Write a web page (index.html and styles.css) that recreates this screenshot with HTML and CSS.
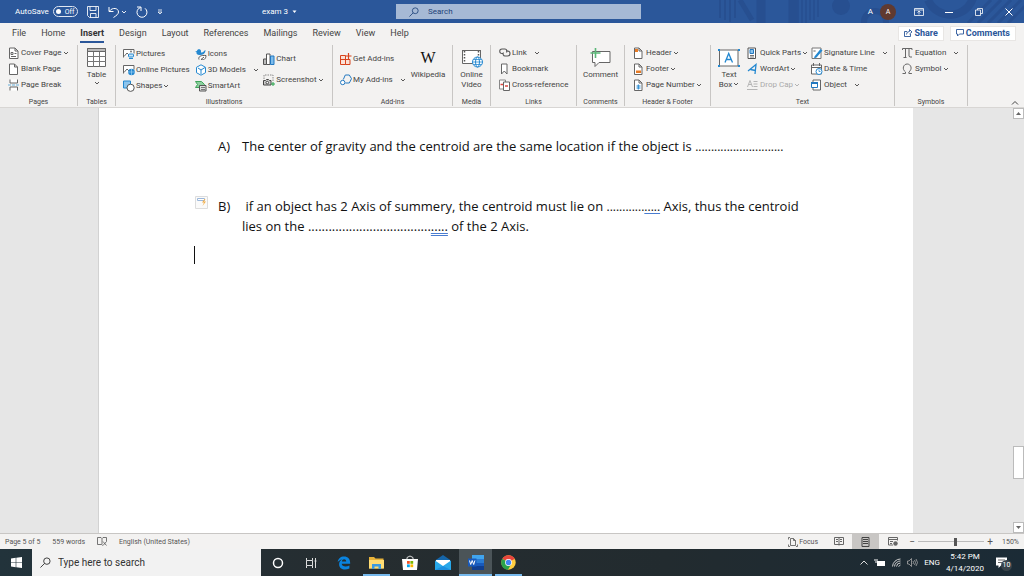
FILE: index.html
```html
<!DOCTYPE html>
<html lang="en">
<head>
<meta charset="utf-8">
<title>exam 3</title>
<link rel="stylesheet" href="styles.css">
</head>
<body>
<svg class="sprite" aria-hidden="true">
  <symbol id="caret" viewBox="0 0 6 6"><path d="M1 2l2 2 2-2" fill="none" stroke="currentColor" stroke-width=".9"/></symbol>
  <symbol id="cover" viewBox="0 0 12 12"><path d="M1.5 1h5.500l3 3v7.500h-8.500zM7 1v3h3M3 5.500h2v2h-2zM3 9.500h5M6.500 6.500h2" fill="#fff" stroke="#666"/></symbol>
  <symbol id="blank" viewBox="0 0 12 12"><path d="M1.500 1h5l3 3v7.500h-8zM6.500 1v3h3" fill="#fff" stroke="#666"/></symbol>
  <symbol id="break" viewBox="0 0 12 12"><path d="M2 .5v3.500h7.500v-3.500M2 11.500v-3.500h7.500v3.500" fill="#fff" stroke="#666"/><path d="M0 6h11.500" stroke="#69b1dc" stroke-dasharray="3 1"/></symbol>
  <symbol id="pictures" viewBox="0 0 12 12"><path d="M.5 9.500v-8h10.500v4M1 8.500l3-3.500 2 2" fill="#fff" stroke="#666"/><circle cx="8" cy="3.500" r="1" fill="#777"/><rect x="5.500" y="6" width="5" height="3" rx="1" fill="#c6e4f8" stroke="#2488d0"/><path d="M6 10.500h4" stroke="#2488d0"/></symbol>
  <symbol id="online" viewBox="0 0 12 12"><path d="M.5 9.500v-8h10.500v4M1 8.500l3-3.500 2 2" fill="#fff" stroke="#666"/><circle cx="8.500" cy="8" r="3.300" fill="#2488d0"/><path d="M5.500 8h6M8.500 5v6" stroke="#9dd0f2" stroke-width=".7"/></symbol>
  <symbol id="shapes" viewBox="0 0 12 12"><path d="M.5 1h7v7h-7z" fill="#8cc5ee" stroke="#2488d0"/><circle cx="7.600" cy="7.800" r="3.600" fill="#fff" stroke="#555"/></symbol>
  <symbol id="icons" viewBox="0 0 12 12"><path d="M0 3.500l2-.5c0-2.500 4-2.500 4 0v1.500c3 0 3-2 4.500-2.500 0 4-3 5-6 5-2.500 0-3.500-1.500-3-3z" fill="#2488d0"/><path d="M4 11.500c-1-3 2-4.500 7-4 0 3.500-2.500 5-5 4l3-2.500" fill="#fff" stroke="#555"/></symbol>
  <symbol id="cube" viewBox="0 0 12 12"><path d="M6 .8l4.500 2.500v5.400l-4.500 2.500-4.500-2.500v-5.400zM3 4l3 2 4-2.500M6 6v4" fill="#fff" stroke="#2488d0"/></symbol>
  <symbol id="smart" viewBox="0 0 12 12"><path d="M.5 1.500h6l3 3-3 3h-6l2-3z" fill="#8bcf9d" stroke="#3fa35a"/><path d="M4.500 5.500h6.500v5.500h-6.500z" fill="#ddd" stroke="#555"/><path d="M6 7.500h4M6 9.500h4" stroke="#777"/></symbol>
  <symbol id="chart" viewBox="0 0 12 12"><path d="M.5 6h3v5.500h-3z" fill="#bbb" stroke="#555"/><path d="M3.500 1h3.500v10.500h-3.500z" fill="#fff" stroke="#555"/><path d="M7.500 3h3.500v8.500h-3.500z" fill="#7dbcec" stroke="#2378c0"/></symbol>
  <symbol id="shot" viewBox="0 0 12 12"><path d="M1 5v-4h9v6" fill="none" stroke="#888" stroke-dasharray="1.500 1"/><path d="M.5 6.500h2l1-1h2l1 1h1.500v4.500h-7.500z" fill="#ccc" stroke="#444"/><circle cx="4.300" cy="8.600" r="1.300" fill="#fff" stroke="#444"/><path d="M10 8v4M8 10h4" stroke="#27a24b"/></symbol>
  <symbol id="getadd" viewBox="0 0 12 12"><path d="M.5 2.500h5v9h-5zM.5 6.500h9.500v5h-4.500v-5" fill="#fbe0d5" stroke="#d8431d"/><path d="M8.500 0v6M5.500 3h6" stroke="#d8431d" stroke-width="1.200"/></symbol>
  <symbol id="myadd" viewBox="0 0 12 12"><path d="M3.300 5.500l2-4.500h4l2.200 3.700-2.200 4.300h-4" fill="none" stroke="#2378c0"/><circle cx="2.700" cy="8.500" r="2.200" fill="#fff" stroke="#2378c0"/></symbol>
  <symbol id="link" viewBox="0 0 12 12"><path d="M4.500 6.500h-1.500a2 2 0 0 1 0-4.500h3a2.200 2.200 0 0 1 1.500 3.500M7 4h1.500a2.200 2.200 0 0 1 0 5h-2.500a2.200 2.200 0 0 1-1.500-3.500" fill="none" stroke="#555" stroke-width="1.100"/></symbol>
  <symbol id="mark" viewBox="0 0 12 12"><path d="M2.500 1h5.500v10l-2.700-3-2.800 3z" fill="#fff" stroke="#666"/></symbol>
  <symbol id="xref" viewBox="0 0 12 12"><path d="M.5 1h6v9h-6z" fill="#fff" stroke="#888"/><path d="M4.500 3h6v8.500h-6z" fill="#fff" stroke="#666"/><path d="M1.500 5.500h2.500M6 7h3" stroke="#dc4a42" stroke-width="1.400"/></symbol>
  <symbol id="header" viewBox="0 0 12 12"><path d="M1.500 1h4.500l3 3v7.500h-7.500zM6 1v3h3" fill="#fff" stroke="#666"/><path d="M2 2h3v3h-3z" fill="#e87b24"/></symbol>
  <symbol id="footer" viewBox="0 0 12 12"><path d="M1.500 1h4.500l3 3v7.500h-7.500zM6 1v3h3" fill="#fff" stroke="#666"/><path d="M3 7.500h5v2.500h-5z" fill="#e87b24"/></symbol>
  <symbol id="number" viewBox="0 0 12 12"><path d="M1.500 1h4.500l3 3v7.500h-7.500zM6 1v3h3" fill="#fff" stroke="#666"/><path d="M5.300 5.500v5M3.500 7h4M3.500 9h4" stroke="#2488d0"/></symbol>
  <symbol id="parts" viewBox="0 0 12 12"><path d="M1 1h7.500v10.500h-7.500z" fill="#fff" stroke="#555"/><path d="M3 2.500h3.500v4h-3.500z" fill="#8cc5ee" stroke="#2378c0"/><path d="M3 8.500h4M3 10h4" stroke="#777"/></symbol>
  <symbol id="wordart" viewBox="0 0 12 12"><path d="M1 8l8-6.500-1 9.500M3.500 6.500l5 1" fill="none" stroke="#2488d0" stroke-width="1.300"/></symbol>
  <symbol id="drop" viewBox="0 0 12 12"><path d="M.5 8l2.500-6.500 2.500 6.500M1.500 5.500h3M6.500 2.500h4M6.500 5h4M6.500 7.500h4M0 10.500h10.500" fill="none" stroke="#b5b5b5"/></symbol>
  <symbol id="sign" viewBox="0 0 12 12"><path d="M1 1h9v10.500h-9z" fill="#fff" stroke="#777"/><path d="M2.500 3l2 2m0-2l-2 2" stroke="#777" stroke-width=".7"/><path d="M3.500 9.500l6-7.500 2 1.500-6 7-2.500 1z" fill="#2488d0"/></symbol>
  <symbol id="date" viewBox="0 0 12 12"><path d="M.5 2h10v9h-10zM.5 4.500h10M2.500 0v3M8.500 0v3" fill="#fff" stroke="#666"/><circle cx="8" cy="8.500" r="3" fill="#fff" stroke="#2488d0"/><path d="M8 6.500v2h1.500" fill="none" stroke="#2488d0" stroke-width=".8"/></symbol>
  <symbol id="object" viewBox="0 0 12 12"><path d="M2 1h7.500v10h-7.500z" fill="#fff" stroke="#666"/><path d="M.5 3.500h6v5h-6z" fill="#fff" stroke="#2378c0"/><path d="M0 3h7v2h-7z" fill="#2378c0"/></symbol>
  <symbol id="pi" viewBox="0 0 12 12"><path d="M.5 3v-1.500h9.500v1.500M3.500 1.500v9M1.500 10.500h3M7 1.500v7.500q0 1.500 3 1" fill="none" stroke="#666"/></symbol>
  <symbol id="omega" viewBox="0 0 12 12"><path d="M.5 10.500h3v-1.500c-4-3-2-8 1.700-8s5.700 5 1.700 8v1.500h3" fill="none" stroke="#666"/></symbol>
  <symbol id="lens" viewBox="0 0 12 12"><circle cx="7.500" cy="4.500" r="3.500" fill="none" stroke="currentColor"/><path d="M5 7l-4.500 4.500" stroke="currentColor"/></symbol>
</svg>

<header class="titlebar">
  <svg class="pattern" viewBox="0 0 306 23" aria-hidden="true"><g fill="none" stroke="#274f90"><path d="M2 0v18M7 0v20M12 0v22M17 0v18" stroke-width="2"/><path d="M43 0v23M75 0v23" stroke-width="9" /><path d="M22 0l12 20" stroke-width="5"/><path d="M80 0v23M84 0v23M88 0v23M92 0v20M96 0v20M100 0v17" stroke-width="1.500"/><circle cx="123" cy="6" r="9" fill="#274f90" stroke="none"/><circle cx="157" cy="22" r="11" stroke-width="6"/><path d="M210 0a24 24 0 0 0 45-2" stroke-width="8"/><path d="M250 23l23-23M260 23l23-23M270 23l23-23M280 23l23-23M290 23l23-23" stroke-width="3"/></g></svg>
  <div class="quick">
    <label class="autosave">AutoSave <input type="checkbox" class="toggle"><span class="pill">Off</span></label>
    <button class="tool" aria-label="Save"><svg width="12" height="12" viewBox="0 0 12 12"><path d="M.5.5h11v11h-9l-2-2zM3 .5v4h6v-4M3.500 11.500v-4h5.500v4" fill="none" stroke="#fff" stroke-opacity=".85"/></svg></button>
    <button class="tool" aria-label="Undo"><svg width="12" height="12" viewBox="0 0 12 12"><path d="M1 1v4.500h4.500M1.500 5c3-4 9-3 9 1 0 2-2 3.500-5 5.500" fill="none" stroke="#fff"/></svg><svg width="6" height="6"><use href="#caret"/></svg></button>
    <button class="tool" aria-label="Redo"><svg width="12" height="12" viewBox="0 0 12 12"><path d="M1 1h4v4M4.500 1.500a5 5 0 1 0 4.500.8" fill="none" stroke="#fff"/></svg></button>
    <button class="tool" aria-label="Customize"><svg width="6" height="6" viewBox="0 0 6 6"><path d="M1 1h4M1 3l2 2 2-2z" fill="none" stroke="#fff" stroke-width=".8"/></svg></button>
  </div>
  <button class="doc-name">exam 3 <svg width="5" height="4" viewBox="0 0 5 4"><path d="M.5.500h4l-2 2.500z" fill="#fff"/></svg></button>
  <label class="search"><svg width="10" height="10"><use href="#lens"/></svg><input type="search" placeholder="Search" aria-label="Search"></label>
  <div class="window-tools">
    <span class="user">A</span><button class="avatar">A</button>
    <button class="win" aria-label="Ribbon display"><svg width="10" height="8" viewBox="0 0 10 8"><path d="M.5.5h9v7h-9zM.5 2h9M5 6.500v-3M3.500 4.500l1.500-1.500 1.500 1.500" fill="none" stroke="#fff" stroke-width=".8"/></svg></button>
    <button class="win" aria-label="Minimize"><svg width="8" height="8" viewBox="0 0 8 8"><path d="M0 4.500h8" stroke="#fff"/></svg></button>
    <button class="win" aria-label="Restore"><svg width="8" height="8" viewBox="0 0 8 8"><path d="M.5 2h5v5.500h-5zM2.500 2v-1.500h5v5h-2" fill="none" stroke="#fff" stroke-width=".8"/></svg></button>
    <button class="win" aria-label="Close"><svg width="8" height="8" viewBox="0 0 8 8"><path d="M.5.5l7 7M7.500.5l-7 7" stroke="#fff"/></svg></button>
  </div>
</header>

<nav class="tabs">
  <button>File</button><button>Home</button><button class="active">Insert</button><button>Design</button><button>Layout</button><button>References</button><button>Mailings</button><button>Review</button><button>View</button><button>Help</button>
  <div class="tab-actions">
    <button class="action"><svg width="8" height="8" viewBox="0 0 8 8"><path d="M3 2.500h-2.500v5h6v-2.500M2.500 5.500q0-3 3-3v-2l2.500 2.500-2.500 2" fill="none" stroke="#2b579a" stroke-width=".9"/></svg>Share</button>
    <button class="action"><svg width="8" height="8" viewBox="0 0 8 8"><path d="M.5.5h7v4.500h-4l-2 2v-2h-1z" fill="none" stroke="#2b579a" stroke-width=".9"/></svg>Comments</button>
  </div>
</nav>

<section class="ribbon">
  <div class="group pages">
    <div class="body"><div class="stack">
      <button class="cmd"><svg><use href="#cover"/></svg>Cover Page<svg class="caret"><use href="#caret"/></svg></button>
      <button class="cmd"><svg><use href="#blank"/></svg>Blank Page</button>
      <button class="cmd"><svg><use href="#break"/></svg>Page Break</button>
    </div></div><h2>Pages</h2>
  </div>
  <div class="group tables">
    <div class="body"><button class="big"><svg width="20" height="20" viewBox="0 0 20 20"><path d="M.5.5h18v18h-18z" fill="#fff" stroke="#666"/><path d="M.5.5h18v3h-18z" fill="#bbb" stroke="#666"/><path d="M6.500 4v15M12.500 4v15M0 8.500h19M0 13.500h19" stroke="#777"/></svg><span>Table</span><svg class="caret"><use href="#caret"/></svg></button></div><h2>Tables</h2>
  </div>
  <div class="group illustrations">
    <div class="body">
      <div class="stack low">
        <button class="cmd"><svg><use href="#pictures"/></svg>Pictures</button>
        <button class="cmd"><svg><use href="#online"/></svg>Online Pictures</button>
        <button class="cmd"><svg><use href="#shapes"/></svg>Shapes<svg class="caret"><use href="#caret"/></svg></button>
      </div>
      <div class="stack low">
        <button class="cmd"><svg><use href="#icons"/></svg>Icons</button>
        <button class="cmd split"><svg><use href="#cube"/></svg>3D Models<svg class="caret"><use href="#caret"/></svg></button>
        <button class="cmd"><svg><use href="#smart"/></svg>SmartArt</button>
      </div>
      <div class="stack pair">
        <button class="cmd"><svg><use href="#chart"/></svg>Chart</button>
        <button class="cmd"><svg><use href="#shot"/></svg>Screenshot<svg class="caret"><use href="#caret"/></svg></button>
      </div>
    </div><h2>Illustrations</h2>
  </div>
  <div class="group addins">
    <div class="body">
      <div class="stack pair">
        <button class="cmd"><svg><use href="#getadd"/></svg>Get Add-ins</button>
        <button class="cmd split"><svg><use href="#myadd"/></svg>My Add-ins<svg class="caret"><use href="#caret"/></svg></button>
      </div>
      <button class="big"><b class="wiki">W</b><span>Wikipedia</span></button>
    </div><h2>Add-ins</h2>
  </div>
  <div class="group media">
    <div class="body"><button class="big"><svg width="22" height="20" viewBox="0 0 22 20"><path d="M1.500 2.500h18v13h-18z" fill="#fff" stroke="#666"/><path d="M3.500 3v12M17.500 3v12" stroke="#555" stroke-width="1.500" stroke-dasharray="1.500 1.500"/><path d="M1 2.500h19" stroke="#666"/><circle cx="16.500" cy="14" r="5" fill="#fff" stroke="#2488d0"/><ellipse cx="16.500" cy="14" rx="2" ry="5" fill="none" stroke="#2488d0"/><path d="M11.500 14h10M12.500 11.500h8M12.500 16.500h8" stroke="#2488d0" stroke-width=".8"/></svg><span>Online<br>Video</span></button></div><h2>Media</h2>
  </div>
  <div class="group links">
    <div class="body"><div class="stack">
      <button class="cmd split"><svg><use href="#link"/></svg>Link<svg class="caret"><use href="#caret"/></svg></button>
      <button class="cmd"><svg><use href="#mark"/></svg>Bookmark</button>
      <button class="cmd"><svg><use href="#xref"/></svg>Cross-reference</button>
    </div></div><h2>Links</h2>
  </div>
  <div class="group comments">
    <div class="body"><button class="big"><svg width="22" height="20" viewBox="0 0 22 20"><path d="M2.500 3.500h17.500v11h-11l-4 4v-4h-2.500z" fill="#fff" stroke="#666"/><path d="M5.500 0v10M.5 5h10" stroke="#5bb878" stroke-width="1.600"/></svg><span>Comment</span></button></div><h2>Comments</h2>
  </div>
  <div class="group headfoot">
    <div class="body"><div class="stack">
      <button class="cmd"><svg><use href="#header"/></svg>Header<svg class="caret"><use href="#caret"/></svg></button>
      <button class="cmd"><svg><use href="#footer"/></svg>Footer<svg class="caret"><use href="#caret"/></svg></button>
      <button class="cmd"><svg><use href="#number"/></svg>Page Number<svg class="caret"><use href="#caret"/></svg></button>
    </div></div><h2>Header &amp; Footer</h2>
  </div>
  <div class="group text">
    <div class="body">
      <button class="big"><svg width="22" height="20" viewBox="0 0 22 20"><path d="M1.500 2h18.500v16h-18.500z" fill="#fff" stroke="#666"/><path d="M7 14.500l3.700-9 3.800 9M8.300 11.500h5" fill="none" stroke="#2488d0" stroke-width="1.300"/><path d="M0 1h2v2h-2zM20 1h2v2h-2zM0 17h2v2h-2zM20 17h2v2h-2z" fill="#2488d0"/></svg><span>Text<br>Box<svg class="caret"><use href="#caret"/></svg></span></button>
      <div class="stack">
        <button class="cmd"><svg><use href="#parts"/></svg>Quick Parts<svg class="caret"><use href="#caret"/></svg></button>
        <button class="cmd"><svg><use href="#wordart"/></svg>WordArt<svg class="caret"><use href="#caret"/></svg></button>
        <button class="cmd" disabled><svg><use href="#drop"/></svg>Drop Cap<svg class="caret"><use href="#caret"/></svg></button>
      </div>
      <div class="stack">
        <button class="cmd split"><svg><use href="#sign"/></svg>Signature Line<svg class="caret"><use href="#caret"/></svg></button>
        <button class="cmd"><svg><use href="#date"/></svg>Date &amp; Time</button>
        <button class="cmd split"><svg><use href="#object"/></svg>Object<svg class="caret"><use href="#caret"/></svg></button>
      </div>
    </div><h2>Text</h2>
  </div>
  <div class="group symbols">
    <div class="body"><div class="stack">
      <button class="cmd split"><svg><use href="#pi"/></svg>Equation<svg class="caret"><use href="#caret"/></svg></button>
      <button class="cmd"><svg><use href="#omega"/></svg>Symbol<svg class="caret"><use href="#caret"/></svg></button>
    </div></div><h2>Symbols</h2>
  </div>
  <button class="collapse" aria-label="Collapse ribbon"><svg width="8" height="6" viewBox="0 0 8 6"><path d="M1 4.500l3-3 3 3" fill="none" stroke="#444"/></svg></button>
</section>

<main class="workspace">
  <article class="page">
    <p class="item"><span></span><span>A)</span><span>The center of gravity and the centroid are the same location if the object is <span class="dots">............................</span></span></p>
    <p class="item"><button class="autocorrect" aria-label="AutoCorrect options"><svg width="13" height="13" viewBox="0 0 13 13"><path d="M.5.5h12v12h-12z" fill="#fafafa" stroke="#ddd"/><path d="M2.500 2.500h7v2h-7z" fill="#fff" stroke="#9db8da"/><path d="M9.500 3l-2.500 3.500h2l-1.500 3.500 3.500-4.500h-2l1.500-2.500z" fill="#f2b04c"/></svg></button><span>B)</span><span>&nbsp;if an object has 2 Axis of summery, the centroid must lie on <span class="dots">............<u>.....</u></span> Axis, thus the centroid<br>lies on the ....................................<u class="double">.....</u> of the 2 Axis.</span></p>
    <div class="cursor"></div>
  </article>
  <div class="scrollbar">
    <button aria-label="Scroll up"><svg width="5" height="3" viewBox="0 0 5 3"><path d="M0 3l2.500-3 2.500 3z" fill="#666"/></svg></button>
    <div class="track"><div class="thumb"></div></div>
    <button aria-label="Scroll down"><svg width="5" height="3" viewBox="0 0 5 3"><path d="M0 0l2.500 3 2.500-3z" fill="#666"/></svg></button>
  </div>
</main>

<footer class="status">
  <span class="pageno">Page 5 of 5</span><span class="words">559 words</span>
  <button class="proof" aria-label="Proofing"><svg width="10" height="9" viewBox="0 0 10 9"><path d="M5 1.500v6M.5.500h3.500l1 1 1-1h3.500v4M.5.500v7h4l1 1M6 4.500l3.500 4M9.500 4.500l-3.500 4" fill="none" stroke="#555" stroke-width=".8"/></svg></button>
  <span>English (United States)</span>
  <div class="views">
    <button class="focus"><svg width="10" height="10" viewBox="0 0 10 10"><path d="M2 .5h-1.500v2M.5 7.500v2h1.500M8 9.500h1.500v-2M2.500 1.500h3l2 2v5h-5zM5.500 1.500v2h2" fill="none" stroke="#555" stroke-width=".8"/></svg>Focus</button>
    <button class="view" aria-label="Read mode"><svg width="10" height="9" viewBox="0 0 10 9"><path d="M.5.500h9v7h-9zM5 .5v8M2 2.500h2M2 4.500h2M6 2.500h2M6 4.500h2" fill="none" stroke="#666"/></svg></button>
    <button class="view on" aria-label="Print layout"><svg width="9" height="10" viewBox="0 0 9 10"><path d="M1 .5h7v9h-7zM2 2.500h5M2 4.500h5M2 6.500h5" fill="none" stroke="#444"/></svg></button>
    <button class="view" aria-label="Web layout"><svg width="10" height="9" viewBox="0 0 10 9"><path d="M5 8h-4.500v-7.500h9v3M1 2.500h8M2 4.500h3M2 6.500h2" fill="none" stroke="#666"/><circle cx="7.500" cy="6.500" r="2.200" fill="#666"/></svg></button>
    <button class="zoom-step">−</button><input class="zoom" type="range" min="0" max="100" value="57" aria-label="Zoom"><button class="zoom-step">+</button>
    <span class="percent">150%</span>
  </div>
</footer>

<footer class="taskbar">
  <button class="start" aria-label="Start"><svg width="11" height="11" viewBox="0 0 11 11"><path d="M0 1.500l4.700-.7v4.400h-4.700zM5.300.7l5.700-.7v5.200h-5.700zM0 5.800h4.700v4.400l-4.700-.7zM5.300 5.800h5.700v5.200l-5.700-.7z" fill="#fff"/></svg></button>
  <label class="task-search"><svg width="11" height="11"><use href="#lens"/></svg><input type="search" placeholder="Type here to search" aria-label="Type here to search"></label>
  <button class="app" aria-label="Cortana"><svg width="12" height="12" viewBox="0 0 12 12"><circle cx="6" cy="6" r="4.500" fill="none" stroke="#fff" stroke-width="1.500"/></svg></button>
  <button class="app" aria-label="Task view"><svg width="12" height="12" viewBox="0 0 12 12"><path d="M1.500 1v2.500h6v-2.500M1.500 11v-2.500h6v2.500M1.500 3.500v5M7.500 3.500v5M10.500 1v10M9.500 4h2" fill="none" stroke="#ddd"/></svg></button>
  <button class="app" aria-label="Edge"><svg width="14" height="14" viewBox="0 0 14 14"><path d="M.7 6c.5-3.500 3-5.500 6.300-5.500 4 0 6.200 2.500 6.200 7.200h-8.500c.2 3 4.500 3.500 7.700 1.700v3c-5 2.300-10.500.5-10.300-4.500.1-2 1.300-3.700 3-4.500-2 .3-3.500 1.300-4.400 2.600zm4.200-.6h4.300c0-3-4-3-4.300 0z" fill="#0a84e0"/></svg></button>
  <button class="app open" aria-label="File Explorer"><svg width="15" height="14" viewBox="0 0 15 14"><path d="M0 1h5l1.500 1.500h8v10h-14.500z" fill="#e8b33a"/><path d="M0 4h15v8.500h-15z" fill="#ffdc73"/><path d="M3 13v-5h9v5h-2.500v-2.500h-4v2.500z" fill="#3d9be0"/></svg></button>
  <button class="app" aria-label="Store"><svg width="16" height="16" viewBox="0 0 16 16"><path d="M5 4v-1.500q3-3 6 0v1.500" fill="none" stroke="#ddd"/><path d="M0 4h16l-1 11h-14z" fill="#fff"/><path d="M5 6h2.800v2.800h-2.800z" fill="#f25022"/><path d="M8.400 6h2.800v2.800h-2.800z" fill="#7fba00"/><path d="M5 9.400h2.800v2.800h-2.800z" fill="#00a4ef"/><path d="M8.400 9.400h2.800v2.800h-2.800z" fill="#ffb900"/></svg></button>
  <button class="app" aria-label="Mail"><svg width="16" height="15" viewBox="0 0 16 15"><path d="M0 5.500l8-5.500 8 5.500z" fill="#1565a8"/><path d="M1 5h14v6h-14z" fill="#fff"/><path d="M0 5.500l8 5.500 8-5.500v9.500h-16z" fill="#28a8ea"/><path d="M0 15l8-4 8 4z" fill="#1a8fe0"/></svg></button>
  <button class="app open current" aria-label="Word"><svg width="16" height="15" viewBox="0 0 16 15"><path d="M4 0h12v4h-12z" fill="#41a5ee"/><path d="M4 4h12v4h-12z" fill="#2b7cd3"/><path d="M4 8h12v3h-12z" fill="#185abd"/><path d="M4 11h12v4h-12z" fill="#103f91"/><path d="M0 3.500h8.500v8h-8.500z" fill="#185abd"/><path d="M1.500 5.500l1.200 4 1.500-4 1.500 4 1.200-4" fill="none" stroke="#fff"/></svg></button>
  <button class="app open" aria-label="Chrome"><svg width="15" height="15" viewBox="0 0 15 15"><circle cx="7.500" cy="7.500" r="7.200" fill="#ffcd40"/><path d="M7.500 7.500l-6.200-3.700a7.200 7.200 0 0 1 12.500 0z" fill="#e8453c"/><path d="M7.500 7.500l-6.200-3.700a7.200 7.200 0 0 0 5.700 11l3-5.300z" fill="#2ba24c"/><circle cx="7.500" cy="7.500" r="3.400" fill="#fff"/><circle cx="7.500" cy="7.500" r="2.700" fill="#4285f4"/></svg></button>
  <div class="tray">
    <svg width="8" height="6" viewBox="0 0 8 6"><path d="M.5 4.500l3.500-3.500 3.500 3.500" fill="none" stroke="#ddd"/></svg>
    <svg width="12" height="8" viewBox="0 0 12 8"><path d="M3 2h8v5h-8z" fill="#fff"/><path d="M0 1h4M1 3h3" stroke="#fff"/></svg>
    <svg width="9" height="9" viewBox="0 0 9 9"><path d="M.5 8.500a8 8 0 0 1 8-7.500M2.500 8.500a6 6 0 0 1 6-5.500M4.500 8.500a4 4 0 0 1 4-3.500M6.500 8.500l2-1.500" fill="none" stroke="#ccc"/></svg>
    <svg width="11" height="9" viewBox="0 0 11 9"><path d="M.5 3h1.500l2.500-2.500v8l-2.500-2.500h-1.500zM6 3q1 1.500 0 3M7.500 2q2 2.500 0 5M9 1q3 3.500 0 7" fill="none" stroke="#aaa" stroke-width=".8"/></svg>
    <span>ENG</span>
    <time>5:42 PM<br>4/14/2020</time>
    <button class="notes" aria-label="Notifications"><svg width="12" height="12" viewBox="0 0 12 12"><path d="M0 .5h11v8h-6l-2.500 2.500v-2.500h-2.500z" fill="#fff"/><path d="M2 3h7M2 5.500h7" stroke="#666"/></svg><span class="badge">10</span></button>
  </div>
</footer>
</body>
</html>
```
FILE: styles.css
```css
* { box-sizing: border-box; }
body {
  margin: 0;
  height: 100vh;
  display: flex;
  flex-direction: column;
  overflow: hidden;
  font: 8px/10px Roboto, "Open Sans", sans-serif;
  color: #444;
  background: #e6e6e6;
}
button, input { font: inherit; color: inherit; background: none; border: 0; padding: 0; margin: 0; }
button { display: flex; align-items: center; white-space: nowrap; }
input { min-width: 0; outline: 0; }
svg { flex: none; display: block; }
.sprite { display: none; }

.titlebar {
  position: relative;
  height: 23px;
  flex: none;
  display: grid;
  grid-template-columns: 262fr 134fr 245fr 383fr;
  align-items: center;
  color: #fff;
  background: #2b579a;
}
.pattern { position: absolute; right: 0; top: 0; width: 306px; height: 23px; }
.quick { display: flex; align-items: center; gap: 9px; padding-left: 15px; }
.autosave { display: flex; align-items: center; gap: 4px; }
.toggle { position: absolute; opacity: 0; }
.pill {
  display: flex;
  align-items: center;
  gap: 4px;
  width: 25px;
  height: 11px;
  padding-left: 2px;
  border: 1px solid #dfe6f1;
  border-radius: 6px;
  font-size: 7px;
}
.pill::before { content: ""; width: 5px; height: 5px; border-radius: 50%; background: #fff; }
.tool { gap: 1px; }
.doc-name { gap: 4px; }
.search {
  display: flex;
  align-items: center;
  gap: 9px;
  height: 15px;
  padding-left: 13px;
  color: #1f4379;
  background: #a6b9d5;
}
.search input { flex: 1; }
.search input::placeholder { color: #1f4379; opacity: 1; }
.window-tools { position: relative; display: flex; align-items: center; justify-content: flex-end; }
.avatar { width: 16px; height: 16px; margin: 0 8px 0 7px; border-radius: 50%; background: #603a30; justify-content: center; font-size: 7px; }
.win { width: 30px; justify-content: center; }

.tabs { height: 20px; flex: none; display: flex; align-items: stretch; gap: 15px; padding: 0 8px 0 12px; font-size: 9px; background: #f3f2f1; }
.tabs > button { padding-top: 2px; border-bottom: 2px solid transparent; }
.tabs .active { font-weight: 700; color: #333; border-color: #2b579a; }
.tab-actions { display: flex; align-items: center; gap: 6px; margin-left: auto; }
.action { gap: 2px; height: 15px; padding: 0 5px; color: #2b579a; font-weight: 700; background: #fff; border: 1px solid #e8e6e4; }

.ribbon { display: flex; flex: none; height: 65px; padding: 2px 0 1px; background: #f3f2f1; border-bottom: 1px solid #d8d6d4; }
.group { flex: none; display: flex; flex-direction: column; border-right: 1px solid #c8c6c4; }
.body { flex: 1; display: flex; }
.group h2 { margin: 0; font: 7px/7px Roboto, sans-serif; text-align: center; }
.stack { display: flex; flex-direction: column; }
.low { padding-top: 1px; }
.pair { padding-top: 6px; gap: 5px; }
.cmd { height: 16px; gap: 1px; }
.cmd > svg { width: 12px; height: 12px; }
.cmd .caret, .caret { width: 6px; height: 6px; margin-left: 1px; }
.cmd .caret { margin-left: 0; }
.cmd.split .caret { margin-left: 6px; }
.cmd:disabled { color: #aaa; }
.big { flex: 1; flex-direction: column; align-items: center; padding-top: 3px; }
.big > svg:first-child { margin-bottom: 2px; }
.big .caret { display: inline-block; }
.wiki { font: 400 16px/20px "Liberation Serif", serif; color: #111; margin-bottom: 2px; }
.pages { width: 78px; }
.pages .body, .links .body, .headfoot .body { padding-left: 8px; }
.tables { width: 38px; }
.illustrations { width: 217px; }
.illustrations .body, .addins .body, .symbols .body { padding-left: 7px; }
.illustrations .stack { width: 72px; }
.illustrations .stack + .stack { width: 69px; }
.addins { width: 120px; }
.addins .stack { width: 64px; }
.media { width: 38px; }
.links { width: 86px; }
.comments { width: 48px; }
.headfoot { width: 86px; }
.text { width: 184px; }
.text .big { flex: none; width: 36px; }
.text .stack { width: 64px; }
.symbols { width: 73px; }
.collapse { margin: auto 5px 0 auto; }

.workspace { flex: 1; min-height: 0; display: flex; border-bottom: 1px solid #c8c6c4; }
.page {
  flex: 1;
  margin: 0 100px 0 98px;
  padding: 28px 95px 0;
  border-left: 1px solid #d2d2d2;
  background: #fff;
  color: #111;
  font: 13px/20px "Open Sans", "Noto Sans", sans-serif;
}
.item { display: grid; grid-template-columns: 24px 24px 1fr; margin: 0 0 40px; white-space: nowrap; }
.autocorrect { align-self: start; padding-left: 1px; }
.dots { font-size: 12px; line-height: 1; }
.item u { text-decoration-color: #4a7dd0; text-underline-offset: 2px; }
.item .double { text-decoration-style: double; }
.cursor { width: 1px; height: 18px; margin-top: -30px; background: #111; }
.scrollbar { width: 11px; flex: none; display: flex; flex-direction: column; background: #e6e6e6; }
.scrollbar button { height: 11px; justify-content: center; background: #fff; border: 1px solid #bbb; }
.track { flex: 1; display: flex; flex-direction: column; justify-content: flex-end; padding-bottom: 43px; }
.thumb { height: 33px; background: #fff; border: 1px solid #bbb; }

.status { height: 15px; flex: none; display: flex; align-items: center; gap: 12px; padding-left: 5px; font-size: 7px; color: #555; background: #f3f2f1; }
.views { display: flex; align-items: center; align-self: stretch; margin-left: auto; padding-right: 5px; }
.focus { gap: 1px; margin-right: 7px; }
.view { width: 27px; height: 100%; justify-content: center; }
.on { background: #c8c6c4; }
.zoom-step { font-size: 10px; width: 12px; justify-content: center; }
.zoom { appearance: none; width: 66px; height: 1px; background: #bbb; }
.zoom::-webkit-slider-thumb { appearance: none; width: 3px; height: 8px; background: #555; }
.percent { margin-left: 6px; }

.taskbar { height: 27px; flex: none; display: flex; background: linear-gradient(90deg, #22333b, #262d30 35%, #222b2f 65%, #1b2b36); color: #fff; }
.start { width: 32px; justify-content: center; }
.task-search { width: 229px; display: flex; align-items: center; gap: 7px; padding-left: 8px; color: #333; background: #f2f2f2; font-size: 10px; }
.task-search input { flex: 1; }
.task-search input::placeholder { color: #333; opacity: 1; }
.app { width: 33px; justify-content: center; }
.open { background: linear-gradient(#76b9ed, #76b9ed) center bottom / 27px 2px no-repeat; }
.current { background-color: #4b5458; background-size: 100% 2px; }
.tray { display: flex; align-items: center; gap: 6px; margin-left: auto; padding-right: 10px; }
.tray time { text-align: center; line-height: 12px; }
.notes { position: relative; margin-left: 6px; width: 18px; }
.badge { position: absolute; left: 5px; top: 3px; width: 11px; height: 11px; border-radius: 50%; background: #39444a; font-size: 7px; line-height: 11px; text-align: center; }
```
